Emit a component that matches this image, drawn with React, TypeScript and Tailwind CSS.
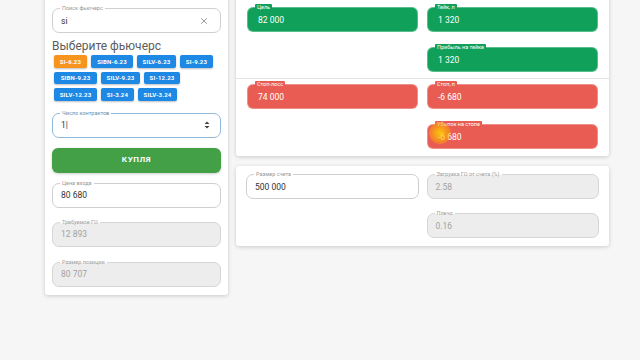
import { X } from "lucide-react";

const chips = [
  { name: "SI-6.23", w: "w-[33px]" },
  { name: "SIBN-6.23", w: "w-[42px]" },
  { name: "SILV-6.23", w: "w-[39px]" },
  { name: "SI-9.23", w: "w-[33px]" },
  { name: "SIBN-9.23", w: "w-[43px]" },
  { name: "SILV-9.23", w: "w-[39px]" },
  { name: "SI-12.23", w: "w-[36px]" },
  { name: "SILV-12.23", w: "w-[43px]" },
  { name: "SI-3.24", w: "w-[33px]" },
  { name: "SILV-3.24", w: "w-[39px]" },
];

interface FieldProps {
  label: string;
  value: string;
  disabled?: boolean;
  focused?: boolean;
  trailing?: React.ReactNode;
}

function Field({ label, value, disabled, focused, trailing }: FieldProps) {
  return (
    <div
      className={
        "relative h-[25px] rounded-[7px] border flex items-center pl-[8px] pr-[10px] " +
        (disabled
          ? "bg-[#ededed] border-[#d6d6d6] text-[#a2a2a2]"
          : focused
            ? "bg-white border-[#8fb8dd] text-[#333]"
            : "bg-white border-[#cfcfcf] text-[#333]")
      }
    >
      <span
        className={
          "absolute -top-[4px] left-[7px] px-[2px] text-[5.5px] leading-[7px] " +
          (disabled
            ? "bg-[linear-gradient(#fff_55%,#ededed_55%)] text-[#a0a0a0]"
            : focused
              ? "bg-white text-[#6a8cab]"
              : "bg-white text-[#999]")
        }
      >
        {label}
      </span>
      <span className="flex-1 text-[8.5px] pt-[1px]">{value}</span>
      {trailing}
    </div>
  );
}

function ColorField({ label, value, red }: { label: string; value: string; red?: boolean }) {
  return (
    <div
      className={
        "relative h-[25px] rounded-[6px] border border-white/30 flex items-center pl-[10px] text-white text-[8.5px] " +
        (red ? "bg-[#e85c54]" : "bg-[#10a05a]")
      }
    >
      <span
        className={
          "absolute -top-[4px] left-[7px] px-[2px] text-[5.5px] leading-[7px] rounded-[1px] " +
          (red ? "bg-[#e85c54]" : "bg-[#10a05a]")
        }
      >
        {label}
      </span>
      <span className="pt-[1px]">{value}</span>
    </div>
  );
}

export default function App() {
  return (
    <div className="relative w-[640px] h-[360px] overflow-hidden bg-[#f6f6f6] flex items-start pl-[45px] gap-[8px] font-['Roboto',sans-serif]">
      {/* order form */}
      <div className="w-[183px] -mt-[10px] pt-[18px] pb-[8px] px-[7px] bg-white rounded-[3px] shadow-[0_1px_4px_rgba(0,0,0,0.18)] flex flex-col">
        <Field
          label="Поиск фьючерс"
          value="si"
          trailing={<X size={10} strokeWidth={1.6} className="text-[#666] mr-[1px]" />}
        />
        <div className="mt-[6px] text-[12px] leading-[14px] text-[#5c5c5c]">Выберите фьючерс</div>
        <div className="mt-[2px] ml-[2px] flex flex-wrap gap-x-[4px] gap-y-[4px]">
          {chips.map((c, i) => (
            <span
              key={c.name}
              className={
                "h-[12.5px] rounded-[2px] flex items-center justify-center text-[6px] font-bold text-white tracking-[0.2px] shadow-[0_1px_2px_rgba(0,0,0,0.25)] " +
                c.w +
                " " +
                (i === 0 ? "bg-[#f7941d]" : "bg-[#1e88e5]")
              }
            >
              {c.name}
            </span>
          ))}
        </div>
        <div className="mt-[12px]">
          <Field
            label="Число контрактов"
            value="1|"
            focused
            trailing={
              <svg width="6" height="8" viewBox="0 0 6 8" className="text-[#444]">
                <path d="M3 0.5 L5.5 3 H0.5 Z M3 7.5 L5.5 5 H0.5 Z" fill="currentColor" />
              </svg>
            }
          />
        </div>
        <button className="mt-[10px] h-[25px] rounded-[6px] bg-[#43a047] text-white text-[8px] font-bold tracking-[0.6px] shadow-[0_1px_3px_rgba(0,0,0,0.2)]">
          КУПЛЯ
        </button>
        <div className="mt-[10px]">
          <Field label="Цена входа" value="80 680" />
        </div>
        <div className="mt-[14px]">
          <Field label="Требуемое ГО" value="12 893" disabled />
        </div>
        <div className="mt-[15px]">
          <Field label="Размер позиции" value="80 707" disabled />
        </div>
      </div>

      {/* results */}
      <div className="w-[373px] flex flex-col gap-[10px]">
        <div className="-mt-[10px] pt-[17px] pb-[7px] bg-white rounded-[3px] shadow-[0_1px_4px_rgba(0,0,0,0.18)]">
          <div className="grid grid-cols-2 gap-x-[9px] gap-y-[15px] px-[11px]">
            <ColorField label="Цель" value="82 000" />
            <ColorField label="Тейк, п" value="1 320" />
            <div />
            <ColorField label="Прибыль на тейке" value="1 320" />
          </div>
          <div className="mt-[6px] h-px bg-[#e4e4e4]" />
          <div className="mt-[5px] grid grid-cols-2 gap-x-[9px] gap-y-[15px] px-[11px]">
            <ColorField label="Стоп-лосс" value="74 000" red />
            <ColorField label="Стоп, п" value="-6 680" red />
            <div />
            <ColorField label="Убыток на стопе" value="-6 680" red />
          </div>
        </div>

        <div className="pt-[8px] pb-[8px] px-[10px] bg-white rounded-[3px] shadow-[0_1px_4px_rgba(0,0,0,0.18)]">
          <div className="grid grid-cols-2 gap-x-[8px] gap-y-[14px]">
            <Field label="Размер счета" value="500 000" />
            <Field label="Загрузка ГО от счета (%)" value="2.58" disabled />
            <div />
            <Field label="Плечо" value="0.16" disabled />
          </div>
        </div>
      </div>

      {/* cursor highlight */}
      <div className="absolute left-[429px] top-[122px] w-[22px] h-[22px] rounded-full bg-[radial-gradient(circle,rgba(255,214,0,0.85)_0%,rgba(255,170,0,0.55)_55%,rgba(255,150,0,0)_100%)] pointer-events-none" />
    </div>
  );
}
